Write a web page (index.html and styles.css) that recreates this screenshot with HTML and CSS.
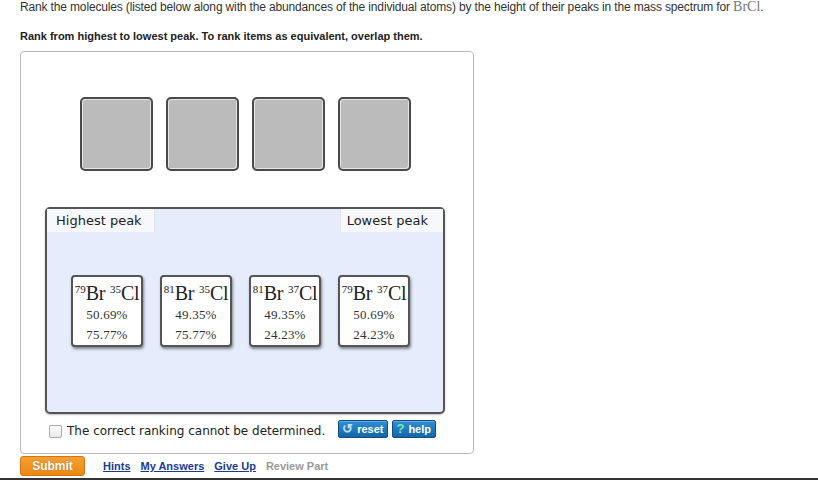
FILE: index.html
```html
<!DOCTYPE html>
<html lang="en">
<head>
    <meta charset="UTF-8">
    <title>Ranking: BrCl mass spectrum</title>
    <link rel="stylesheet" href="styles.css">
</head>
<body>
    <div class="page">
        <p class="prompt">Rank the molecules (listed below along with the abundances of the individual atoms) by the height of their peaks in the mass spectrum for <span class="formula">BrCl</span>.</p>
        <p class="instructions">Rank from highest to lowest peak. To rank items as equivalent, overlap them.</p>

        <div class="problem">
            <div class="slots">
                <div class="slot"></div>
                <div class="slot"></div>
                <div class="slot"></div>
                <div class="slot"></div>
            </div>

            <div class="rank-area">
                <div class="rank-labels">
                    <span class="label">Highest peak</span>
                    <span class="label">Lowest peak</span>
                </div>
                <div class="cards">
                    <div class="card">
                        <div class="species"><sup>79</sup>Br <sup>35</sup>Cl</div>
                        <div class="pct">50.69%</div>
                        <div class="pct">75.77%</div>
                    </div>
                    <div class="card">
                        <div class="species"><sup>81</sup>Br <sup>35</sup>Cl</div>
                        <div class="pct">49.35%</div>
                        <div class="pct">75.77%</div>
                    </div>
                    <div class="card">
                        <div class="species"><sup>81</sup>Br <sup>37</sup>Cl</div>
                        <div class="pct">49.35%</div>
                        <div class="pct">24.23%</div>
                    </div>
                    <div class="card">
                        <div class="species"><sup>79</sup>Br <sup>37</sup>Cl</div>
                        <div class="pct">50.69%</div>
                        <div class="pct">24.23%</div>
                    </div>
                </div>
            </div>

            <div class="options">
                <label class="cannot"><span class="checkbox"></span>The correct ranking cannot be determined.</label>
                <div class="tools">
                    <button class="tool"><span class="tool-icon reset-icon">&#8634;</span>reset</button>
                    <button class="tool"><span class="tool-icon help-icon">?</span>help</button>
                </div>
            </div>
        </div>

        <div class="actions">
            <button class="submit">Submit</button>
            <a href="#" class="link">Hints</a>
            <a href="#" class="link">My Answers</a>
            <a href="#" class="link">Give Up</a>
            <span class="link disabled">Review Part</span>
        </div>
    </div>
    <div class="rule"></div>
</body>
</html>
```

FILE: styles.css
```css
* {
    margin: 0;
    padding: 0;
    box-sizing: border-box;
}

body {
    margin: 0;
    font-family: 'Liberation Sans', Arial, sans-serif;
    background: #ffffff;
    color: #222;
    overflow: hidden;
}

.page {
    padding-left: 20px;
    height: 478px;
}

.prompt {
    font-size: 12px;
    line-height: 14px;
    color: #333;
    letter-spacing: -0.15px;
}

.formula {
    font-family: 'Liberation Serif', serif;
    font-size: 14px;
    color: #777;
    letter-spacing: 0;
}

.instructions {
    font-size: 11px;
    font-weight: bold;
    line-height: 14px;
    margin-top: 15px;
    color: #222;
}

.problem {
    margin-top: 8px;
    width: 454px;
    height: 403px;
    border: 1px solid #bbb;
    border-radius: 4px;
    padding: 45px 0 0 24px;
}

.slots {
    display: flex;
    gap: 13px;
    padding-left: 35px;
}

.slot {
    width: 73px;
    height: 74px;
    background: #bbbbbb;
    border: 2px solid #4a4a4a;
    border-radius: 5px;
    box-shadow: inset 1px 1px 0 #e6e6e6, inset -1px -1px 0 #e6e6e6;
}

.rank-area {
    margin-top: 36px;
    width: 400px;
    height: 207px;
    background: #e5ecfb;
    border: 2px solid #555;
    border-radius: 5px;
    box-shadow: 0 1px 2px rgba(0,0,0,0.25);
}

.rank-labels {
    display: flex;
    justify-content: space-between;
}

.label {
    font-family: 'DejaVu Sans', Verdana, sans-serif;
    font-size: 13px;
    line-height: 23px;
    padding: 0 12px 0 9px;
    background: #f6f8fc;
    color: #222;
    border-right: 1px solid #dfe3ea;
}

.label + .label {
    border-right: none;
    border-left: 1px solid #dfe3ea;
    padding: 0 15px 0 6px;
}

.cards {
    display: flex;
    gap: 17px;
    padding: 43px 0 0 24px;
}

.card {
    width: 72px;
    height: 72px;
    background: #fff;
    border: 2px solid #555;
    border-radius: 4px;
    box-shadow: 1px 2px 3px rgba(0,0,0,0.45);
    font-family: 'Liberation Serif', 'DejaVu Serif', serif;
    text-align: center;
    color: #333;
}

.species {
    font-size: 20px;
    line-height: 24px;
    color: #222;
    letter-spacing: -0.3px;
    white-space: nowrap;
}

.species sup {
    font-size: 11px;
    vertical-align: 7px;
    letter-spacing: 0;
}

.pct {
    font-size: 13px;
    line-height: 20px;
    letter-spacing: 0.2px;
}

.options {
    display: flex;
    align-items: center;
    justify-content: space-between;
    width: 391px;
    margin-top: 5px;
}

.cannot {
    display: flex;
    align-items: center;
    font-family: 'DejaVu Sans', Verdana, sans-serif;
    font-size: 12px;
    color: #222;
    white-space: nowrap;
    padding-left: 4px;
    padding-top: 5px;
}

.checkbox {
    width: 13px;
    height: 13px;
    border: 1px solid #aaa;
    border-radius: 2px;
    background: linear-gradient(180deg, #fdfdfd, #e8e8e8);
    margin-right: 5px;
}

.tools {
    display: flex;
    gap: 4px;
}

.tool {
    display: flex;
    align-items: center;
    height: 18px;
    padding: 0 4px 0 3px;
    font-family: 'Liberation Sans', Arial, sans-serif;
    font-size: 11px;
    font-weight: bold;
    color: #fff;
    background: linear-gradient(180deg, #2f8fd6, #1466a6);
    border: 1px solid #0f4f86;
    border-radius: 2px;
    box-shadow: inset 0 1px 0 rgba(255,255,255,0.25);
}

.tool-icon {
    margin-right: 4px;
    font-size: 13px;
}

.reset-icon {
    color: #bfe3ff;
}

.help-icon {
    color: #6ff0b0;
}

.actions {
    display: flex;
    align-items: center;
    gap: 10px;
    margin-top: 2px;
}

.submit {
    width: 65px;
    height: 20px;
    margin-right: 8px;
    font-family: 'Liberation Sans', Arial, sans-serif;
    font-size: 12px;
    font-weight: bold;
    color: #fff;
    background: linear-gradient(180deg, #f5a030, #ec8717);
    border: 1px solid #d07510;
    border-radius: 3px;
    text-shadow: 0 0 1px rgba(0,0,0,0.4);
}

.link {
    font-size: 11px;
    font-weight: bold;
    color: #1b3a93;
    text-decoration: underline;
}

.link.disabled {
    color: #999;
    text-decoration: none;
}

.rule {
    height: 2px;
    background: #333;
}
```
